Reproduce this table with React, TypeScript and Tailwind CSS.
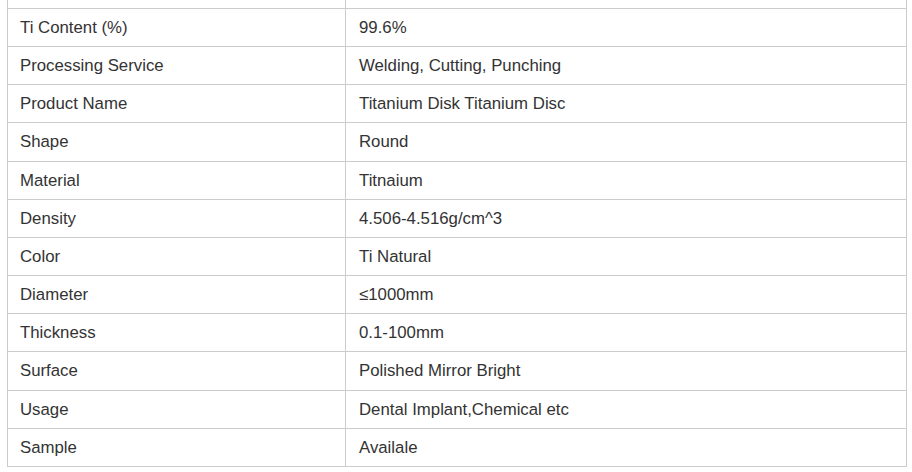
const ROWS: [string, string][] = [
  ['Ti Content (%)', '99.6%'],
  ['Processing Service', 'Welding, Cutting, Punching'],
  ['Product Name', 'Titanium Disk Titanium Disc'],
  ['Shape', 'Round'],
  ['Material', 'Titnaium'],
  ['Density', '4.506-4.516g/cm^3'],
  ['Color', 'Ti Natural'],
  ['Diameter', '≤1000mm'],
  ['Thickness', '0.1-100mm'],
  ['Surface', 'Polished Mirror Bright'],
  ['Usage', 'Dental Implant,Chemical etc'],
  ['Sample', 'Availale'],
];

function Row({ name, value }: { name: string; value: string }) {
  return (
    <div className="grid h-[38.17px] grid-cols-[338px_1fr] border-b border-[#cccccc]">
      <div className="flex items-center border-r border-[#cccccc] pl-[12px]">{name}</div>
      <div className="flex items-center pl-[13px]">{value}</div>
    </div>
  );
}

export default function App() {
  return (
    <div className="h-[472px] w-[912px] overflow-hidden bg-white">
      <div
        className="ml-[7px] w-[900px] border-x border-[#cccccc] text-[16.8px] text-[#333333]"
        style={{ fontFamily: '"Liberation Sans", Arial, sans-serif' }}
      >
        {/* previous row, scrolled mostly out of view */}
        <div className="grid h-[9px] grid-cols-[338px_1fr] border-b border-[#cccccc]">
          <div className="border-r border-[#cccccc]" />
          <div />
        </div>
        {ROWS.map(([name, value]) => (
          <Row key={name} name={name} value={value} />
        ))}
      </div>
    </div>
  );
}
